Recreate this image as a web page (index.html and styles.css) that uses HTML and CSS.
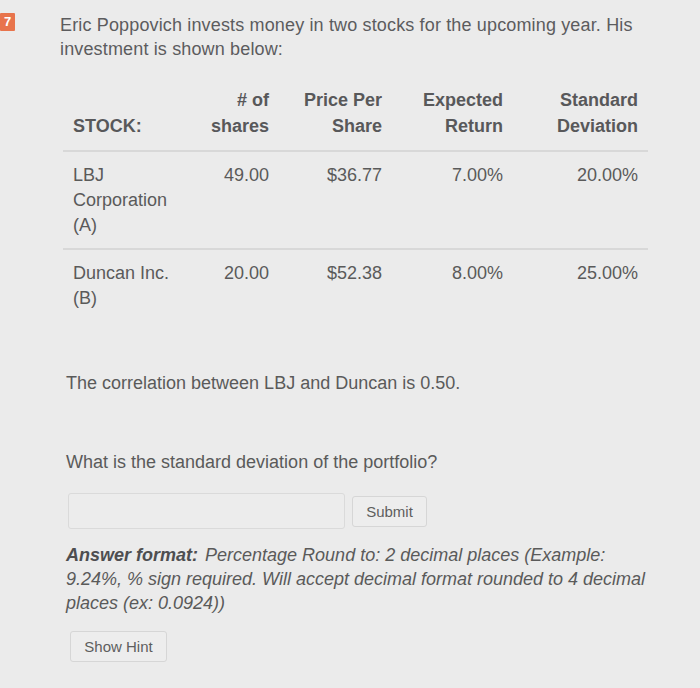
FILE: index.html
```html
<!DOCTYPE html>
<html>
<head>
<meta charset="utf-8">
<link rel="stylesheet" href="styles.css">
</head>
<body>
<div class="page">
  <div class="badge">7</div>
  <div class="content">
    <p class="title">Eric Poppovich invests money in two stocks for the upcoming year. His investment is shown below:</p>
    <table class="stocks">
      <colgroup>
        <col class="c1"><col class="c2"><col class="c3"><col class="c4"><col class="c5">
      </colgroup>
      <thead>
        <tr>
          <th class="left">STOCK:</th>
          <th># of shares</th>
          <th>Price Per Share</th>
          <th>Expected Return</th>
          <th>Standard Deviation</th>
        </tr>
      </thead>
      <tbody>
        <tr class="first">
          <td class="left">LBJ Corporation (A)</td>
          <td>49.00</td>
          <td>$36.77</td>
          <td>7.00%</td>
          <td>20.00%</td>
        </tr>
        <tr>
          <td class="left">Duncan Inc. (B)</td>
          <td>20.00</td>
          <td>$52.38</td>
          <td>8.00%</td>
          <td>25.00%</td>
        </tr>
      </tbody>
    </table>
    <p class="text corr">The correlation between LBJ and Duncan is 0.50.</p>
    <p class="text question">What is the standard deviation of the portfolio?</p>
    <div class="answer-row">
      <div class="input"></div>
      <div class="btn submit">Submit</div>
    </div>
    <p class="text format"><b class="label">Answer format:</b> Percentage Round to: 2 decimal places (Example: 9.24%, % sign required. Will accept decimal format rounded to 4 decimal places (ex: 0.0924))</p>
    <div class="btn hint">Show Hint</div>
  </div>
</div>
</body>
</html>
```
FILE: styles.css
```css
html, body {
  margin: 0;
  padding: 0;
}
body {
  background: #ebebeb;
  font-family: "Liberation Sans", Arial, sans-serif;
  font-size: 18px;
  color: #5a5a5a;
  width: 700px;
  height: 688px;
  overflow: hidden;
}
.page {
  display: flex;
  align-items: flex-start;
  padding-top: 13px;
}
.badge {
  flex: none;
  width: 15px;
  height: 18px;
  background: #e8744c;
  color: #fff;
  font-size: 13px;
  font-weight: bold;
  line-height: 18px;
  text-align: center;
  border-radius: 1px;
}
.content {
  margin-left: 45px;
  width: 592px;
}
.title {
  margin: 0;
  line-height: 24px;
  color: #5c5c5e;
  letter-spacing: 0.15px;
}
.stocks {
  margin-top: 16px;
  margin-left: 3px;
  width: 585px;
  border-collapse: collapse;
  table-layout: fixed;
  line-height: 25px;
}
.c1 { width: 118px; }
.c2 { width: 98px; }
.c3 { width: 113px; }
.c4 { width: 121px; }
.c5 { width: 135px; }
.stocks th {
  font-weight: bold;
  text-align: right;
  vertical-align: bottom;
  padding: 10px 10px 11px 10px;
  color: #58585a;
  line-height: 26px;
  border-bottom: 2px solid #d8d8d8;
}
.stocks td {
  text-align: right;
  vertical-align: top;
  padding: 11px 10px 10px 10px;
}
.stocks tr.first td {
  border-bottom: 2px solid #d8d8d8;
}
.stocks .left {
  text-align: left;
}
.text {
  margin: 0;
  margin-left: 6px;
  line-height: 24px;
}
.corr {
  margin-top: 50px;
}
.question {
  margin-top: 55px;
}
.answer-row {
  display: flex;
  align-items: center;
  gap: 7px;
  margin-top: 19px;
  margin-left: 8px;
}
.input {
  width: 275px;
  height: 34px;
  background: #ececec;
  border: 1px solid #dadada;
  border-radius: 3px;
}
.btn {
  background: #ededed;
  border: 1px solid #d6d6d6;
  border-radius: 3px;
  font-size: 15px;
  color: #5e5e5e;
  text-align: center;
  box-sizing: border-box;
}
.submit {
  width: 75px;
  height: 31px;
  line-height: 29px;
}
.format {
  margin-top: 14px;
  font-style: italic;
}
.format .label {
  color: #4e4e50;
  padding-right: 2px;
}
.hint {
  margin-top: 16px;
  margin-left: 10px;
  width: 97px;
  height: 31px;
  line-height: 29px;
}
```
